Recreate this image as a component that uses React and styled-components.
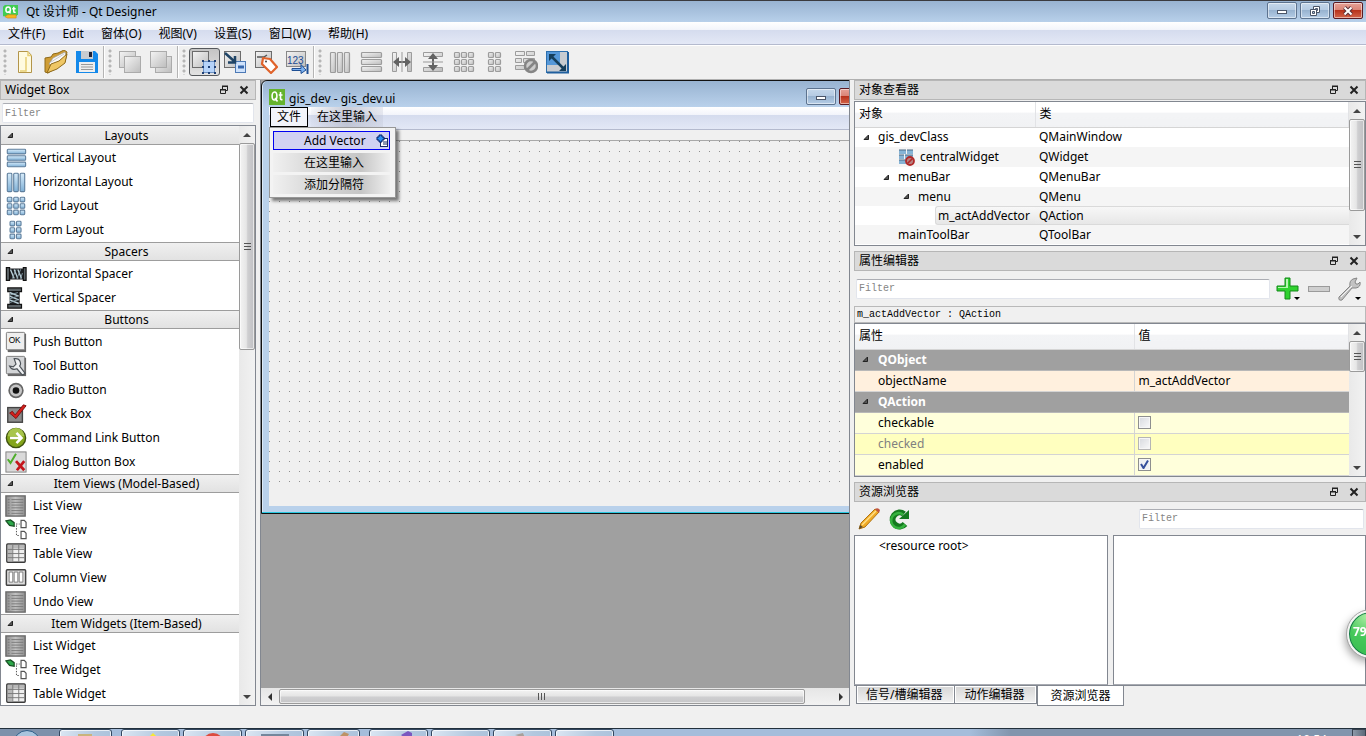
import React from "react";
import styled, { createGlobalStyle, css } from "styled-components";

const GlobalStyle = createGlobalStyle`
  * { box-sizing: border-box; }
  html, body { margin: 0; height: 100%; overflow: hidden; }
  body, button, input, table {
    font-family: "Noto Sans", "Noto Sans CJK SC", sans-serif;
    font-size: 12px;
    line-height: 16px;
    color: #000;
  }
  button { border: 0; padding: 0; background: none; }
  svg { display: block; flex: none; }
`;

/* ---------- window shell ---------- */

const Shell = styled.div`
  height: 100vh;
  display: flex;
  flex-direction: column;
  background: #f0f0f0;
  overflow: hidden;
`;

const TitleBar = styled.header`
  display: flex;
  align-items: center;
  gap: 8px;
  height: 22px;
  flex: none;
  padding: 0 3px;
  border-top: 1px solid #3a3a3e;
  background: linear-gradient(#98b3d1, #b8d0ea);
`;

const Title = styled.h1`
  flex: 1;
  margin: 0;
  font-size: 12px;
  font-weight: 400;
`;

const CaptionButtons = styled.div`
  display: flex;
  gap: 3px;
  align-self: flex-start;
  padding-top: 1px;
`;

const CaptionButton = styled.button`
  display: flex;
  align-items: center;
  justify-content: center;
  width: 30px;
  height: 17px;
  border: 1px solid ${(p) => (p.$close ? "#5c1a22" : "#5d738f")};
  border-radius: 2px;
  box-shadow: inset 0 0 0 1px rgba(255, 255, 255, 0.5);
  background: ${(p) =>
    p.$close
      ? "linear-gradient(#e6a196 0, #d98375 48%, #b8331c 50%, #d3644a 100%)"
      : "linear-gradient(#c5d7ea 0, #b4cae2 48%, #98b3d0 50%, #b5cde6 100%)"};
`;

const menuStrip = css`
  background: linear-gradient(#fff 0, #f3f5fb 34%, #d5dcee 38%, #e3e8f6 100%);
`;

const MenuBar = styled.nav`
  ${menuStrip}
  display: flex;
  gap: 1px;
  align-items: center;
  height: 23px;
  flex: none;
  border-bottom: 1px solid #b4bace;
`;

const MenuButton = styled.button`
  height: 22px;
  padding: 2px 8px 0;
`;

const ToolBar = styled.div`
  display: flex;
  height: 35px;
  flex: none;
  padding-bottom: 1px;
  border-top: 1px solid #fff;
  border-bottom: 1px solid #b0b0b0;
`;

const ToolGroup = styled.div`
  display: flex;
  align-items: center;
  border-right: ${(p) => (p.$last ? "0" : "1px solid #b4b4b4")};
  box-shadow: ${(p) => (p.$last ? "none" : "1px 0 #fff")};
  margin-right: 1px;
`;

const Grip = styled.span`
  width: 10px;
  height: 26px;
  background: radial-gradient(circle at 5px 2px, #b6b6b6 1px, transparent 2px) 0 0 / 10px 5px;
`;

const ToolButton = styled.button`
  display: flex;
  align-items: center;
  justify-content: center;
  width: 31px;
  height: 28px;
  padding-right: 1px;
  border-radius: 3px;
  ${(p) =>
    p.$pressed &&
    css`
      border: 1px solid #55585c;
      background: linear-gradient(#c4c4c4, #e2e2e2);
    `}
`;

const Main = styled.main`
  flex: 1;
  min-height: 0;
  display: flex;
  gap: 4px;
`;

const StatusBar = styled.div`
  height: 22px;
  flex: none;
`;

/* ---------- docks ---------- */

const LeftDock = styled.aside`
  width: 256px;
  flex: none;
  display: flex;
  flex-direction: column;
`;

const RightColumn = styled.aside`
  width: 512px;
  flex: none;
  display: flex;
  flex-direction: column;
  gap: 5px;
`;

const Dock = styled.section`
  display: flex;
  flex-direction: column;
  flex: ${(p) => (p.$grow ? "1" : "none")};
  min-height: 0;
`;

const DockHeader = styled.div`
  display: flex;
  align-items: center;
  gap: 9px;
  height: 20px;
  flex: none;
  padding: 0 5px 0 4px;
  border: 1px solid #b6b6b6;
  background: #dadada;
`;

const DockTitle = styled.h2`
  flex: 1;
  margin: 0;
  font-size: 12px;
  font-weight: 400;
`;

const IconButton = styled.button`
  display: flex;
  align-items: center;
  justify-content: center;
`;

const FilterInput = styled.input`
  flex: 1;
  min-width: 0;
  height: 20px;
  padding: 0 2px;
  border: 1px solid #e2e5ec;
  border-top-color: #abadb3;
  border-radius: 2px;
  background: #fff;
  font-family: "Liberation Mono", monospace;
  font-size: 10px;
  outline: none;
  &::placeholder { color: #858585; opacity: 1; }
`;

const FilterRow = styled.div`
  display: flex;
  padding: 3px 2px 2px;
`;

const Framed = styled.div`
  display: flex;
  min-height: 0;
  border: 1px solid #828790;
  background: #fff;
  height: ${(p) => p.$height || "auto"};
  flex: ${(p) => (p.$height ? "none" : "1")};
  margin-top: ${(p) => p.$top || "0"};
`;

const FrameBody = styled.div`
  flex: 1;
  min-width: 0;
  overflow: hidden;
`;

/* ---------- scroll bars ---------- */

const Bar = styled.div`
  display: flex;
  flex: none;
  flex-direction: ${(p) => (p.$horizontal ? "row" : "column")};
  ${(p) => (p.$horizontal ? "height: 17px;" : "width: 16px;")}
  background: ${(p) =>
    p.$horizontal
      ? "linear-gradient(#e6e6e6, #f2f2f2)"
      : "linear-gradient(90deg, #e9e9e9, #f2f2f2)"};
`;

const Arrow = styled.button`
  display: flex;
  align-items: center;
  justify-content: center;
  flex: 0 0 17px;
`;

const Track = styled.div`
  flex: 1;
  min-height: 0;
  min-width: 0;
`;

const Thumb = styled.div`
  display: flex;
  align-items: center;
  justify-content: center;
  border: 1px solid #9a9a9a;
  border-radius: 2px;
  box-shadow: inset 0 0 0 1px rgba(255, 255, 255, 0.6);
  ${(p) =>
    p.$horizontal
      ? css`
          width: ${p.$size};
          height: 15px;
          margin: 1px;
          background: linear-gradient(#f3f3f3 0, #e4e4e4 48%, #cfcfd1 52%, #c6c6c8 100%);
        `
      : css`
          height: ${p.$size};
          background: linear-gradient(90deg, #f3f3f3 0, #e6e6e6 45%, #cfcfd1 55%, #c0c0c3 100%);
        `}
`;

const arrows = {
  up: "M0 5 L4 1 L8 5Z",
  down: "M0 1 L4 5 L8 1Z",
};

function ScrollBar({ size, horizontal }) {
  return (
    <Bar $horizontal={horizontal}>
      <Arrow aria-label={horizontal ? "Scroll left" : "Scroll up"}>
        {horizontal ? (
          <svg width="6" height="8"><path d="M5 0L1 4l4 4z" fill="#333" /></svg>
        ) : (
          <svg width="8" height="6"><path d={arrows.up} fill="#444" /></svg>
        )}
      </Arrow>
      <Track>
        <Thumb $size={size} $horizontal={horizontal}>
          {horizontal ? (
            <svg width="8" height="7"><path d="M.5 0v7M3.500 0v7M6.500 0v7" stroke="#555" /></svg>
          ) : (
            <svg width="7" height="9"><path d="M0 1.500h7M0 4.500h7M0 7.500h7" stroke="#555" /></svg>
          )}
        </Thumb>
      </Track>
      <Arrow aria-label={horizontal ? "Scroll right" : "Scroll down"}>
        {horizontal ? (
          <svg width="6" height="8"><path d="M1 0l4 4-4 4z" fill="#333" /></svg>
        ) : (
          <svg width="8" height="6"><path d={arrows.down} fill="#444" /></svg>
        )}
      </Arrow>
    </Bar>
  );
}

/* ---------- small glyphs ---------- */

const FloatGlyph = () => (
  <svg width="10" height="10" viewBox="0 0 10 10" fill="none" stroke="#222">
    <path d="M3.500 4V1.500h5v4H6.500M3 1.500h6" />
    <path d="M1.500 4.500h5v4h-5zM1 4.500h6" />
    <path d="M3 1h6M1 5h6" />
  </svg>
);
const CloseGlyph = () => (
  <svg width="12" height="10" viewBox="0 0 12 10" stroke="#222" strokeWidth="2">
    <path d="M2.500 1.500l7 7M9.500 1.500l-7 7" />
  </svg>
);
const Expander = () => (
  <svg width="7" height="7" viewBox="0 0 7 7"><path d="M5.500 1V5.500H1z" fill="#555" stroke="#222" /></svg>
);
const MinGlyph = () => (
  <svg width="12" height="8" viewBox="0 0 12 8"><rect x="1.500" y="3.500" width="9" height="3" fill="#fff" stroke="#4a5568" /></svg>
);
const RestoreGlyph = () => (
  <svg width="12" height="12" viewBox="0 0 12 12" fill="#fff" stroke="#4a5568">
    <path d="M4.500 1.500h6v6h-6z" />
    <path d="M6.500 3.500h2v2h-2z" fill="#a8c0da" />
    <path d="M1.500 4.500h6v6h-6z" />
    <path d="M3.500 6.500h2v2h-2z" fill="#a8c0da" />
  </svg>
);
const WinCloseGlyph = () => (
  <svg width="12" height="10" viewBox="0 0 12 10">
    <path d="M2.500 1.500l7 7M9.500 1.500l-7 7" stroke="#5c3038" strokeWidth="4" />
    <path d="M2.500 1.500l7 7M9.500 1.500l-7 7" stroke="#fff" strokeWidth="2" />
  </svg>
);

const QtLogo = ({ size = 16, pencil }) => (
  <svg width={size} height={size} viewBox="0 0 16 16">
    <path d={pencil ? "M2 1h14v10l-2 2H0V3z" : "M0 0h16v16H0z"} fill={pencil ? "#41cd52" : "#65b32e"} />
    <g fill="none" stroke="#fff" strokeWidth="1.600">
      <ellipse cx="5.500" cy={pencil ? 6 : 7} rx="2.400" ry={pencil ? 2.8 : 4} />
      <path d={pencil ? "M6 7.500l2 2.500M11.500 3v5q0 1.200 2 .8M9.800 5h3.700" : "M6 9l2.500 3.500M11.500 3v6.500q0 1.500 2 1M9.800 6h3.700"} />
    </g>
    {pencil && <path d="M2 13.500l3-2h9v3.500H5z" fill="#f5b820" stroke="#d97f10" strokeWidth=".6" />}
  </svg>
);

/* ---------- tool bar and widget drawings ---------- */

const Svg = ({ children, size = 24 }) => (
  <svg width={size} height={size} viewBox="0 0 24 24" fill="none">
    <defs>
      <linearGradient id="gy" x2="1" y2="1"><stop stopColor="#f4f4f4" /><stop offset="1" stopColor="#bdbdbd" /></linearGradient>
      <linearGradient id="bl" x2="0" y2="1"><stop stopColor="#d8ecfa" /><stop offset="1" stopColor="#7fb0d6" /></linearGradient>
      <linearGradient id="dk"><stop stopColor="#8b8b8b" /><stop offset=".5" stopColor="#c2c2c2" /><stop offset="1" stopColor="#8f8f8f" /></linearGradient>
    </defs>
    {children}
  </svg>
);

const layouts = {
  rows: [[2, 2, 20, 5], [2, 9, 20, 5], [2, 16, 20, 5]],
  cols: [[2, 2, 5, 20], [9, 2, 5, 20], [16, 2, 5, 20]],
  grid: [2, 9, 16].flatMap((y) => [2, 9, 16].map((x) => [x, y, 5, 5])),
  form: [2, 9, 16].flatMap((y) => [5, 12].map((x) => [x, y, 5, 5])),
};

const Cells = ({ kind, blue }) =>
  layouts[kind].map(([x, y, w, h]) => (
    <rect key={`${x}-${y}`} x={x + 0.5} y={y + 0.5} width={w} height={h} rx="1"
      fill={blue ? "url(#bl)" : "url(#gy)"} stroke={blue ? "#5f7f9d" : "#9c9c9c"} strokeWidth="1.2" />
  ));

const LayoutIcon = ({ kind, blue, size }) => <Svg size={size}><Cells kind={kind} blue={blue} /></Svg>;

const Sheet = ({ x, y, s = 16, dark }) => (
  <rect x={x + 0.5} y={y + 0.5} width={s} height={s} fill="url(#gy)" stroke={dark ? "#6c6c6c" : "#ababab"} />
);

const toolIcons = {
  create: (
    <Svg><path d="M5.500 1.500H15l3.500 4v17h-13z" fill="#fffbe0" stroke="#b3954a" /><path d="M15 1.500v4h3.500M13 7v14H7" stroke="#e8cf74" strokeWidth="1.500" /></Svg>
  ),
  open: (
    <Svg>
      <path d="M1 8l6-1 2-3 5-1 6-3 3 2-2 10L4 23l-3-1z" fill="#cf9d35" stroke="#8f6a1a" />
      <path d="M5 14L9 8 21 2l1 5-13 9z" fill="#fafafa" stroke="#999" strokeWidth=".7" />
      <path d="M7 12L20 4" stroke="#c9c9c9" />
      <path d="M3 23l4-9 8-3 8-7-2 9-8 6z" fill="#efc765" stroke="#8f6a1a" />
    </Svg>
  ),
  save: (
    <Svg>
      <path d="M1 1h19l3 3v19H1z" fill="#1489ea" />
      <path d="M6 1h12v8H6z" fill="#c9ccd0" /><path d="M14 2h3v5h-3z" fill="#223" />
      <path d="M4 12h16v10H4z" fill="#eee" /><path d="M6 14.500h12M6 17h12M6 19.500h12" stroke="#999" />
    </Svg>
  ),
  front: <Svg><Sheet x={1} y={1} /><Sheet x={6} y={6} /></Svg>,
  back: <Svg><Sheet x={6} y={6} /><Sheet x={1} y={1} /></Svg>,
  widgets: (
    <Svg>
      <Sheet x={0} y={1} dark />
      <rect x="11.500" y="11.500" width="11" height="11" fill="#b5d3fa" stroke="#6e93c4" />
      <path d="M10 10h2v2h-2zM16 10h2v2h-2zM22 10h2v2h-2zM10 16h2v2h-2zM22 16h2v2h-2zM10 22h2v2h-2zM16 22h2v2h-2zM22 22h2v2h-2zM16 16h2v2h-2z" fill="#1e3f75" />
    </Svg>
  ),
  signals: (
    <Svg>
      <Sheet x={1} y={1} dark />
      <rect x="12.500" y="11.500" width="10" height="11" fill="#cfe2fb" stroke="#4c79b5" /><path d="M15 17h6" stroke="#3566ab" strokeWidth="3" />
      <path d="M2 3l9 8M12 6v6.500H5" stroke="#1f4466" strokeWidth="2.500" />
    </Svg>
  ),
  buddies: (
    <Svg>
      <Sheet x={1} y={1} dark />
      <path d="M3 7h7l3-2M10 7v4" stroke="#555" strokeWidth="1.500" />
      <path d="M9 8l7 1 7 8-6 6-9-9z" fill="#fff" stroke="#e0632b" strokeWidth="2.200" strokeLinejoin="round" /><circle cx="12" cy="11.500" r="1" fill="#444" />
    </Svg>
  ),
  tabs: (
    <Svg>
      <rect x="1.500" y="1.500" width="19" height="15" fill="url(#gy)" stroke="#888" />
      <text x="2" y="14" fontSize="10" fill="#1d4c94" fontFamily="Liberation Sans">123</text>
      <path d="M7 18.500h9v-4l5 5.500-5 3.500v-3H7z" fill="#7cb1ef" stroke="#1f4f94" /><path d="M22.500 14v10" stroke="#1f4f94" strokeWidth="2" />
    </Svg>
  ),
  cols: <LayoutIcon kind="cols" />,
  rows: <LayoutIcon kind="rows" />,
  splitH: (
    <Svg>
      <path d="M2.500 2.500h4v19h-4zM17.500 2.500h4v19h-4z" fill="url(#gy)" stroke="#9c9c9c" />
      <path d="M3 12l6-5v4h6V7l6 5-6 5v-4H9v4z" fill="#626262" /><path d="M12 2v20" stroke="#999" />
    </Svg>
  ),
  splitV: (
    <Svg>
      <path d="M2.500 2.500h19v4h-19zM2.500 17.500h19v4h-19z" fill="url(#gy)" stroke="#9c9c9c" />
      <path d="M12 3l5 6h-4v6h4l-5 6-5-6h4V9H7z" fill="#626262" /><path d="M2 12h20" stroke="#999" />
    </Svg>
  ),
  grid: <LayoutIcon kind="grid" />,
  form: <LayoutIcon kind="form" />,
  breakLayout: (
    <Svg>
      <path d="M1.500 1.500h9v4h-9zM12.500 1.500h8v4h-8zM1.500 8.500h6v4h-6zM9.500 8.500h11v4h-11zM1.500 15.500h9v4h-9z" fill="url(#gy)" stroke="#9c9c9c" />
      <circle cx="17" cy="16" r="6" fill="#ccc" stroke="#858585" strokeWidth="2.500" /><path d="M13 20l8-8" stroke="#858585" strokeWidth="2.500" />
    </Svg>
  ),
  adjust: (
    <Svg>
      <rect x="1.500" y="1.500" width="21" height="21" fill="#c8ccd1" stroke="#2c6fae" /><path d="M2 2h13v13H2z" fill="#5598d9" />
      <path d="M5 5l14 14" stroke="#163f5c" strokeWidth="2.500" /><path d="M4 4h7L4 11zM21 21h-7l7-7z" fill="#163f5c" />
      <path d="M2 22.500h21V2" stroke="#1f5f9e" strokeWidth="2" />
    </Svg>
  ),
};

const listIcon = (
  <Svg size={22}>
    <rect x="1" y="1" width="21" height="22" fill="url(#dk)" stroke="#6a6a6a" strokeWidth="1.500" />
    <path d="M3 5h2M7 5h13M3 8h2M7 8h13M3 11h2M7 11h13M3 14h2M7 14h13M3 17h2M7 17h13M3 20h2M7 20h13" stroke="#777" />
  </Svg>
);
const treeIcon = (
  <Svg size={22}>
    <path d="M1 2l5-1 4 3 0 4-5-1z" fill="#2da84a" stroke="#174f22" strokeWidth="1.300" />
    <path d="M12 5.500h4M12.500 7v11H16" stroke="#444" strokeDasharray="1.500 1.500" />
    <path d="M17.500 1.500h3.500l2 2v6h-5.500zM17.500 13.500h3.500l2 2v6h-5.500z" fill="#fff" stroke="#555" strokeWidth="1.300" />
  </Svg>
);
const tableIcon = (
  <Svg size={22}>
    <rect x="2" y="1" width="20" height="20" rx="1" fill="#f0f0f0" stroke="#3a3a3a" strokeWidth="1.600" />
    <path d="M3 2h18v4H3zM3 2h5v18H3z" fill="#b8b8b8" /><path d="M3 7h18M3 11.500h18M3 16h18M8.500 2v18M15 2v18" stroke="#777" />
  </Svg>
);

const widgetIcons = {
  rows: <LayoutIcon kind="rows" blue size={22} />,
  cols: <LayoutIcon kind="cols" blue size={22} />,
  grid: <LayoutIcon kind="grid" blue size={22} />,
  form: <LayoutIcon kind="form" blue size={22} />,
  hSpacer: (
    <Svg size={22}>
      <path d="M1.500 5h3.500v14H1.500zM20 5h3v14h-3z" fill="#5a6266" stroke="#111" strokeWidth="1.300" />
      <path d="M5 6h15v12H5z" fill="#1c1f22" /><path d="M6 7l4 10M10 7l4 10M14 7l4 10" stroke="#b9cfd8" strokeWidth="1.500" /><path d="M8 17l4-10M13 17l4-10M17 17l2-6" stroke="#8ea5b0" />
    </Svg>
  ),
  vSpacer: (
    <Svg size={22}>
      <path d="M3 1h15v4H3zM3 19h15v4H3z" fill="#5a6266" stroke="#111" strokeWidth="1.300" />
      <path d="M5 5h11v14H5z" fill="#1c1f22" /><path d="M5 6l10 4M5 10l10 4M5 14l10 4" stroke="#b9cfd8" strokeWidth="1.500" /><path d="M5 9l9-3M5 13l9-3M5 17l9-3" stroke="#8ea5b0" />
    </Svg>
  ),
  push: (
    <Svg size={22}>
      <path d="M3 3h20v20H3z" fill="#666" /><rect x="1.500" y="1.500" width="20" height="19" rx="1" fill="#eee" stroke="#777" />
      <text x="4" y="13" fontSize="9" fill="#000" fontFamily="Liberation Sans">OK</text>
    </Svg>
  ),
  tool: (
    <Svg size={22}>
      <path d="M3 3h20v20H3z" fill="#666" /><rect x="1.500" y="1.500" width="20" height="19" rx="1" fill="#d2d4d6" stroke="#777" />
      <path d="M10 4q6-1 7 5 0 2-1 3l6 8-3 2-6-7q-6 2-8-3l4 1 3-3z" fill="#eef0f2" stroke="#4d5359" strokeWidth="1.300" />
    </Svg>
  ),
  radio: (
    <Svg size={22}><circle cx="12" cy="12.500" r="7.500" fill="#c6c6c6" stroke="#666" strokeWidth="1.800" /><circle cx="12" cy="12.500" r="3.600" fill="#111" /></Svg>
  ),
  check: (
    <Svg size={22}>
      <rect x="3" y="5" width="16" height="16" fill="#8b8b8b" stroke="#444" strokeWidth="1.500" />
      <path d="M5 11l3-2 3 4 9-11 3 1-11 14z" fill="#d5201b" stroke="#7a0f0f" />
    </Svg>
  ),
  command: (
    <Svg size={22}>
      <circle cx="12" cy="12" r="10.500" fill="#84a51b" stroke="#3f5210" strokeWidth="1.500" /><path d="M3 10a9 9 0 0118 0z" fill="#a8c54b" />
      <path d="M5.500 12H18M12.500 6.500L18 12l-5.500 5.500" stroke="#fff" strokeWidth="2.800" />
    </Svg>
  ),
  dialog: (
    <Svg size={22}>
      <rect x="1" y="1" width="22" height="22" fill="#dadada" stroke="#7b7b7b" />
      <path d="M3 9l3 4 6-10" stroke="#4fae2c" strokeWidth="2.200" /><path d="M12 11l9 10M21 11l-8 10" stroke="#c4161c" strokeWidth="3" />
    </Svg>
  ),
  list: listIcon,
  tree: treeIcon,
  table: tableIcon,
  column: (
    <Svg size={22}>
      <rect x="1.500" y="3" width="21" height="17" rx="1" fill="#ddd" stroke="#444" strokeWidth="1.600" />
      <path d="M4.500 5.500h4v11h-4zM10 5.500h4v11h-4zM15.500 5.500h4v11h-4z" fill="#fff" stroke="#777" />
    </Svg>
  ),
};

/* ---------- widget box ---------- */

const GroupHeader = styled.button`
  display: flex;
  align-items: center;
  width: 100%;
  height: 19px;
  margin-bottom: 1px;
  padding: 0 0 0 6px;
  border-top: 1px solid ${(p) => (p.$first ? "#f4f4f4" : "#9d9d9d")};
  border-bottom: 1px solid #9d9d9d;
  background: linear-gradient(#f0f0f0, #e2e2e2);
`;

const GroupName = styled.span`
  flex: 1;
  text-align: center;
`;

const WidgetList = styled.ul`
  list-style: none;
  margin: 0;
  padding: 0;
`;

const WidgetItem = styled.li`
  display: flex;
  align-items: center;
  gap: 6px;
  height: 24px;
  padding-left: 4px;
`;

const groups = [
  ["Layouts", [["rows", "Vertical Layout"], ["cols", "Horizontal Layout"], ["grid", "Grid Layout"], ["form", "Form Layout"]]],
  ["Spacers", [["hSpacer", "Horizontal Spacer"], ["vSpacer", "Vertical Spacer"]]],
  ["Buttons", [["push", "Push Button"], ["tool", "Tool Button"], ["radio", "Radio Button"], ["check", "Check Box"], ["command", "Command Link Button"], ["dialog", "Dialog Button Box"]]],
  ["Item Views (Model-Based)", [["list", "List View"], ["tree", "Tree View"], ["table", "Table View"], ["column", "Column View"], ["list", "Undo View"]]],
  ["Item Widgets (Item-Based)", [["list", "List Widget"], ["tree", "Tree Widget"], ["table", "Table Widget"]]],
];

function DockTitleBar({ children }) {
  return (
    <DockHeader>
      <DockTitle>{children}</DockTitle>
      <IconButton aria-label="Float"><FloatGlyph /></IconButton>
      <IconButton aria-label="Close"><CloseGlyph /></IconButton>
    </DockHeader>
  );
}

function WidgetBox() {
  return (
    <LeftDock>
      <DockTitleBar>Widget Box</DockTitleBar>
      <FilterRow><FilterInput placeholder="Filter" aria-label="Filter widgets" /></FilterRow>
      <Framed>
        <FrameBody>
          {groups.map(([name, items], i) => (
            <section key={name}>
              <GroupHeader $first={i === 0}><Expander /><GroupName>{name}</GroupName></GroupHeader>
              <WidgetList>
                {items.map(([icon, label]) => (
                  <WidgetItem key={label}>{widgetIcons[icon]}{label}</WidgetItem>
                ))}
              </WidgetList>
            </section>
          ))}
        </FrameBody>
        <ScrollBar size="38%" />
      </Framed>
    </LeftDock>
  );
}

/* ---------- form editor ---------- */

const Workspace = styled.section`
  flex: 1;
  min-width: 0;
  display: flex;
  flex-direction: column;
  border: 1px solid #828790;
  border-top: 0;
  background: #a0a0a0;
  overflow: hidden;
`;

const Desktop = styled.div`
  flex: 1;
  min-height: 0;
  overflow: hidden;
`;

const FormWindow = styled.div`
  display: flex;
  flex-direction: column;
  height: 434px;
  margin-right: -28px;
  padding: 0 7px 7px;
  border: 1px solid #111;
  border-radius: 6px 0 0 0;
  box-shadow: inset 0 -1px #27c8e0, inset 1px 0 #dbe9f7;
  background: linear-gradient(#98b3d1, #b9d1eb 26px);
`;

const FormTitle = styled.div`
  display: flex;
  align-items: center;
  gap: 4px;
  height: 26px;
  flex: none;
  padding-top: 6px;
`;

const FormCaption = styled.h2`
  flex: 1;
  margin: 0;
  padding-top: 3px;
  font-size: 12px;
  font-weight: 400;
`;

const FormMenuBar = styled.div`
  ${menuStrip}
  position: relative;
  display: flex;
  gap: 3px;
  height: 23px;
  flex: none;
  padding: 0 1px 2px;
  border-bottom: 1px solid #b4bace;
`;

const FormMenu = styled.button`
  padding: 0 6px;
  ${(p) =>
    p.$active
      ? "border: 1px solid #000; background: #f2f4fa;"
      : "background: linear-gradient(90deg, rgba(190, 194, 210, 0.1), rgba(180, 184, 200, 0.7), rgba(190, 194, 210, 0.3));"}
`;

const FormToolStrip = styled.div`
  height: 11px;
  flex: none;
  border-bottom: 1px solid #a8a8a8;
  background: #f0f0f0;
`;

const Canvas = styled.div`
  flex: 1;
  background:
    linear-gradient(90deg, transparent 1px, #f0f0f0 1px) 0 0 / 10px 10px,
    linear-gradient(#909090 1px, #f0f0f0 1px) 0 0 / 10px 10px;
`;

const FormStatus = styled.div`
  height: 22px;
  flex: none;
  background: #f0f0f0;
`;

const Popup = styled.div`
  position: absolute;
  left: 0;
  top: 20px;
  z-index: 1;
  display: flex;
  flex-direction: column;
  gap: 3px;
  width: 127px;
  padding: 3px;
  border: 1px solid #979797;
  background: #f3f3f3;
  box-shadow: 3px 3px 3px rgba(0, 0, 0, 0.5);
`;

const PopupItem = styled.button`
  display: flex;
  align-items: center;
  justify-content: space-between;
  height: 19px;
  margin-right: 2px;
  padding-left: 31px;
  ${(p) =>
    p.$selected
      ? "border: 1px solid #0000f0; background: #d1d1f2; padding-left: 30px;"
      : "background: linear-gradient(90deg, #f0f0f0, #dedede 25%, #c6c6c6 75%, #efefef);"}
`;

const AddSubmenuGlyph = () => (
  <svg width="13" height="13" viewBox="0 0 13 13">
    <rect x="4.500" y="4.500" width="7" height="8" fill="#fff" stroke="#1a2c63" /><path d="M7 8h4M7 10h4" stroke="#1a2c63" />
    <path d="M3 1h3v2h2v3H6v2H3V6H1V3h2z" fill="#2d8ff0" stroke="#001c66" />
  </svg>
);

function FormEditor() {
  return (
    <Workspace>
      <Desktop>
        <FormWindow>
          <FormTitle>
            <QtLogo />
            <FormCaption>gis_dev - gis_dev.ui</FormCaption>
            <CaptionButtons>
              <CaptionButton aria-label="Minimize form"><MinGlyph /></CaptionButton>
              <CaptionButton $close aria-label="Close form" />
            </CaptionButtons>
          </FormTitle>
          <FormMenuBar>
            <FormMenu $active>文件</FormMenu>
            <FormMenu>在这里输入</FormMenu>
            <Popup>
              <PopupItem $selected>Add Vector<AddSubmenuGlyph /></PopupItem>
              <PopupItem>在这里输入</PopupItem>
              <PopupItem>添加分隔符</PopupItem>
            </Popup>
          </FormMenuBar>
          <FormToolStrip />
          <Canvas />
          <FormStatus />
        </FormWindow>
      </Desktop>
      <ScrollBar horizontal size="95%" />
    </Workspace>
  );
}

/* ---------- object inspector ---------- */

const Grid = styled.table`
  width: 100%;
  table-layout: fixed;
  border-collapse: collapse;
`;

const HeadCell = styled.th`
  width: ${(p) => p.$width || "auto"};
  height: 25px;
  padding: 0 4px;
  border-bottom: 1px solid #d5d5d5;
  border-right: 1px solid #e2e3e6;
  background: linear-gradient(#fff 40%, #f3f4f6 45%, #f1f2f4);
  text-align: left;
  font-weight: 400;
`;

const TreeRow = styled.tr`
  height: ${(p) => (p.$compact ? "19px" : "20px")};
  background: ${(p) => (p.$odd ? "#f5f5f5" : "#fff")};
`;

const TreeCell = styled.td`
  padding: 0 0 0 ${(p) => p.$indent || "4px"};
  ${(p) => p.$selected && "background: linear-gradient(#f8f8f8, #e6e6e6); box-shadow: inset 0 1px #dadada, inset 0 -1px #dadada;"}
`;

const NodeLabel = styled.span`
  display: flex;
  align-items: center;
  gap: ${(p) => (p.$icon ? "5px" : "8px")};
  white-space: nowrap;
  ${(p) =>
    p.$selected &&
    "height: 19px; padding-left: 2px; border: 1px solid #dadada; border-right: 0; border-radius: 3px 0 0 3px; background: linear-gradient(#f8f8f8, #e6e6e6);"}
`;

const BrokenLayout = () => (
  <svg width="17" height="17" viewBox="0 0 17 17" fill="none">
    <path d="M1 1h7v4H1zM9 1h6v4H9zM1 6h5v4H1zM7 6h8v4H7zM1 11h7v4H1z" fill="#86b4d6" />
    <path d="M1 1h7M9 1h6M1 6h5M7 6h8M1 11h7" stroke="#4d6a85" />
    <circle cx="12" cy="12" r="4" fill="#b98080" stroke="#b02a2a" strokeWidth="1.800" /><path d="M9.500 14.500l5-5" stroke="#b02a2a" strokeWidth="1.600" />
  </svg>
);

const objects = [
  { name: "gis_devClass", cls: "QMainWindow", indent: "8px", open: true },
  { name: "centralWidget", cls: "QWidget", indent: "43px", icon: true },
  { name: "menuBar", cls: "QMenuBar", indent: "28px", open: true },
  { name: "menu", cls: "QMenu", indent: "48px", open: true },
  { name: "m_actAddVector", cls: "QAction", indent: "80px", selected: true },
  { name: "mainToolBar", cls: "QToolBar", indent: "43px" },
];

function ObjectInspector() {
  return (
    <Dock>
      <DockTitleBar>对象查看器</DockTitleBar>
      <Framed $height="145px" $top="1px">
        <FrameBody>
          <Grid>
            <thead><tr><HeadCell $width="180px">对象</HeadCell><HeadCell>类</HeadCell></tr></thead>
            <tbody>
              {objects.map((o, i) => (
                <TreeRow key={o.name} $odd={i % 2 === 1} $compact={i > 2}>
                  <TreeCell $indent={o.indent}>
                    <NodeLabel $icon={o.icon} $selected={o.selected}>
                      {o.open && <Expander />}{o.icon && <BrokenLayout />}{o.name}
                    </NodeLabel>
                  </TreeCell>
                  <TreeCell $selected={o.selected}>{o.cls}</TreeCell>
                </TreeRow>
              ))}
            </tbody>
          </Grid>
        </FrameBody>
        <ScrollBar size="84%" />
      </Framed>
    </Dock>
  );
}

/* ---------- property editor ---------- */

const PropertyTools = styled.div`
  display: flex;
  align-items: center;
  gap: 6px;
  height: 35px;
  padding: 0 4px 0 2px;
`;

const ObjectLabel = styled.div`
  height: 17px;
  padding: 0 2px;
  border: 1px solid #b9b9b9;
  font-family: "Liberation Mono", monospace;
  font-size: 10px;
  line-height: 15px;
`;

const rowColors = {
  group: "#a0a0a0",
  name: "#fff0de",
  light: "#ffffdb",
  dim: "#ffffbf",
};

const PropertyRow = styled.tr`
  height: 21px;
  background: ${(p) => rowColors[p.$tone]};
  color: ${(p) => (p.$tone === "group" ? "#fff" : p.$tone === "dim" ? "#808080" : "#000")};
  font-weight: ${(p) => (p.$tone === "group" ? 700 : 400)};
`;

const PropertyCell = styled.td`
  padding: 0 0 0 ${(p) => (p.$name ? "23px" : "4px")};
  border-bottom: 1px solid #d4d4d4;
  border-right: ${(p) => (p.$name ? "1px solid #d4d4d4" : "0")};
`;

const GroupCell = styled.td`
  padding: 0 0 0 7px;
  border-bottom: 1px solid #b8b8b8;
`;

const GroupLabel = styled.span`
  display: flex;
  align-items: center;
  gap: 9px;
`;

const CheckBox = styled.input`
  appearance: none;
  display: block;
  width: 13px;
  height: 13px;
  margin: 0 0 0 -1px;
  border: 1px solid ${(p) => (p.disabled ? "#b5b5b5" : "#8e8f8f")};
  box-shadow: inset 0 0 0 1px #f6f6f6;
  background: linear-gradient(135deg, #d6d9de, #fafafa);
  &:checked {
    background: url("data:image/svg+xml,%3Csvg xmlns='http://www.w3.org/2000/svg' viewBox='0 0 11 11'%3E%3Cpath d='M2 5l2.500 4L9 1.500' fill='none' stroke='%23344f9c' stroke-width='2'/%3E%3C/svg%3E") #eef0f4;
  }
`;

const PlusGlyph = () => (
  <svg width="25" height="24" viewBox="0 0 25 24">
    <path d="M9 1h5v8h8v5h-8v8H9v-8H1V9h8z" fill="#2fd12f" stroke="#14891a" /><path d="M10 2h2v9H2v-1h8z" fill="#b6f5b0" />
    <path d="M18 20h6l-3 3z" fill="#000" />
  </svg>
);
const MinusGlyph = () => (
  <svg width="24" height="24" viewBox="0 0 24 24"><rect x="1.500" y="9.500" width="21" height="5" fill="#cfcfcf" stroke="#9b9b9b" /></svg>
);
const WrenchGlyph = () => (
  <svg width="25" height="24" viewBox="0 0 25 24">
    <path d="M2 20l11-11q-1-5 3-7l4-1-2 4 1 2 2 0 2-2q1 5-4 6l-4 0L5 23q-4 1-3-3z" fill="#c2c2c2" stroke="#858585" /><path d="M4 20L15 9" stroke="#f5f5f5" />
    <path d="M18 20h6l-3 3z" fill="#000" />
  </svg>
);

function PropertyEditor() {
  return (
    <Dock>
      <DockTitleBar>属性编辑器</DockTitleBar>
      <PropertyTools>
        <FilterInput placeholder="Filter" aria-label="Filter properties" />
        <IconButton aria-label="Add property"><PlusGlyph /></IconButton>
        <IconButton aria-label="Remove property"><MinusGlyph /></IconButton>
        <IconButton aria-label="Configure"><WrenchGlyph /></IconButton>
      </PropertyTools>
      <ObjectLabel>m_actAddVector : QAction</ObjectLabel>
      <Framed $height="154px">
        <FrameBody>
          <Grid>
            <thead><tr><HeadCell $width="279px">属性</HeadCell><HeadCell>值</HeadCell></tr></thead>
            <tbody>
              <PropertyRow $tone="group"><GroupCell colSpan={2}><GroupLabel><Expander />QObject</GroupLabel></GroupCell></PropertyRow>
              <PropertyRow $tone="name"><PropertyCell $name>objectName</PropertyCell><PropertyCell>m_actAddVector</PropertyCell></PropertyRow>
              <PropertyRow $tone="group"><GroupCell colSpan={2}><GroupLabel><Expander />QAction</GroupLabel></GroupCell></PropertyRow>
              <PropertyRow $tone="light"><PropertyCell $name><label htmlFor="checkable">checkable</label></PropertyCell><PropertyCell><CheckBox type="checkbox" id="checkable" /></PropertyCell></PropertyRow>
              <PropertyRow $tone="dim"><PropertyCell $name><label htmlFor="checked">checked</label></PropertyCell><PropertyCell><CheckBox type="checkbox" id="checked" disabled /></PropertyCell></PropertyRow>
              <PropertyRow $tone="light"><PropertyCell $name><label htmlFor="enabled">enabled</label></PropertyCell><PropertyCell><CheckBox type="checkbox" id="enabled" defaultChecked /></PropertyCell></PropertyRow>
            </tbody>
          </Grid>
        </FrameBody>
        <ScrollBar size="26%" />
      </Framed>
    </Dock>
  );
}

/* ---------- resource browser ---------- */

const ResourceTools = styled.div`
  display: flex;
  align-items: center;
  gap: 6px;
  height: 33px;
  flex: none;
  padding: 0 2px 0 3px;
`;

const ResourceFilter = styled.div`
  display: flex;
  width: 225px;
  margin-left: auto;
`;

const Panes = styled.div`
  flex: 1;
  min-height: 0;
  display: flex;
  gap: 5px;
  border-bottom: 1px solid #828790;
`;

const Pane = styled.div`
  flex: ${(p) => p.$share};
  padding: 2px 24px;
  border: 1px solid #828790;
  border-bottom-color: #a8abb2;
  background: #fff;
`;

const Tabs = styled.div`
  display: flex;
  align-items: flex-start;
  height: 20px;
  flex: none;
  padding-left: 2px;
`;

const Tab = styled.button`
  height: ${(p) => (p.$active ? "20px" : "18px")};
  padding: 0 12px 0 ${(p) => (p.$active ? "12px" : "9px")};
  border: 1px solid #828790;
  border-top: 0;
  border-left-width: ${(p) => (p.$joined ? "0" : "1px")};
  box-shadow: inset 0 0 0 1px #fff;
  background: ${(p) => (p.$active ? "#fff" : "linear-gradient(#d6d6d6, #f2f2f2)")};
`;

const PencilGlyph = () => (
  <svg width="24" height="24" viewBox="0 0 24 24">
    <path d="M2 22l2-6L18 2l4 3L8 20z" fill="#f0ab27" stroke="#b17414" /><path d="M5 18L19 4" stroke="#ffe08a" strokeWidth="1.500" />
    <path d="M18 2q3-2 5 1l-1 3-4-4z" fill="#c25540" /><path d="M2 22l1-4 3 2z" fill="#5c4a2b" />
  </svg>
);
const ReloadGlyph = () => (
  <svg width="24" height="24" viewBox="0 0 24 24">
    <path d="M18 17a7 7 0 11-1-10" fill="none" stroke="#14791f" strokeWidth="6" /><path d="M22 3v9H12z" fill="#14791f" />
    <path d="M18 17.500a7.500 7.500 0 11-2-10" fill="none" stroke="#35b23e" strokeWidth="2.500" />
  </svg>
);

function ResourceBrowser() {
  return (
    <Dock $grow>
      <DockTitleBar>资源浏览器</DockTitleBar>
      <ResourceTools>
        <IconButton aria-label="Edit resources"><PencilGlyph /></IconButton>
        <IconButton aria-label="Reload"><ReloadGlyph /></IconButton>
        <ResourceFilter><FilterInput placeholder="Filter" aria-label="Filter resources" /></ResourceFilter>
      </ResourceTools>
      <Panes>
        <Pane $share="1">&lt;resource root&gt;</Pane>
        <Pane $share="1" />
      </Panes>
      <Tabs role="tablist">
        <Tab role="tab">信号/槽编辑器</Tab>
        <Tab role="tab" $joined>动作编辑器</Tab>
        <Tab role="tab" $active>资源浏览器</Tab>
      </Tabs>
    </Dock>
  );
}

/* ---------- desktop extras ---------- */

const SpeedBall = styled.div`
  position: fixed;
  right: -29px;
  bottom: 78px;
  width: 48px;
  height: 48px;
  padding: 12px 0 0 4px;
  border: 2px solid #f4f4f4;
  border-radius: 50%;
  outline: 1px solid #a6a6a6;
  box-shadow: inset 0 0 0 1px #16764a, -2px 4px 8px rgba(0, 0, 0, 0.35);
  background: radial-gradient(circle at 40% 10%, #a7eca0, #45c85a 45%, #35b84e);
  color: #fff;
  font-size: 12px;
  font-weight: 700;
`;

const TaskBar = styled.footer`
  display: flex;
  gap: 3px;
  height: 8px;
  flex: none;
  overflow: hidden;
  border-top: 1px solid #22303c;
  background: linear-gradient(90deg, #7d91ab 0, #7d91ab 58px, #a5bddb 64px, #a5bddb 71%, #8295ad 74%);
`;

const StartOrb = styled.button`
  width: 28px;
  height: 28px;
  flex: none;
  margin: 1px 15px 0 13px;
  border: 1px solid #2b5b86;
  border-radius: 50%;
  background: #a8c4dd;
`;

const TaskButton = styled.button`
  display: flex;
  justify-content: center;
  flex: none;
  width: ${(p) => (p.$narrow ? "53px" : "59px")};
  margin-right: ${(p) => (p.$stack ? "6px" : "0")};
  height: 30px;
  border: 1px solid #33475f;
  border-radius: 3px 3px 0 0;
  box-shadow: inset 0 0 0 1px rgba(255, 255, 255, 0.7);
  background: linear-gradient(110deg, #dce7f3, #b3c8df 60%, #a9c0da);
`;

const tasks = [
  { name: "Explorer", narrow: true, stack: true, art: <path d="M12 4h14v3H12z" fill="#c9b47c" /> },
  { name: "Shield", art: <path d="M22 3l6 6H16z" fill="#f7e834" /> },
  { name: "Browser", art: <circle cx="20" cy="14" r="11" fill="#dc4c3f" /> },
  { name: "Monitor", art: <path d="M6 4h28v4H6z" fill="#74879c" /> },
  { name: "Editor", narrow: true, stack: true, art: <path d="M24 8l6-6 5 2-3 5z" fill="#bd9366" /> },
  { name: "Studio", art: <path d="M22 5l7-4 4 2v5h-7z" fill="#7a58c0" /> },
  { name: "Notes" },
  { name: "Viewer", art: <path d="M12 5l8-2 2 5z" fill="#a8a09a" /> },
  { name: "Designer" },
];

const Clock = styled.time`
  margin-left: auto;
  padding: 3px 22px 0 0;
  color: #fff;
  font-size: 12px;
`;

const ShowDesktop = styled.button`
  width: 14px;
  height: 30px;
  border: 1px solid #38424f;
  background: linear-gradient(90deg, #8c99a8, #5d6a7a);
`;

const toolGroups = [
  ["create", "open", "save"],
  ["front", "back"],
  ["widgets", "signals", "buddies", "tabs"],
  ["cols", "rows", "splitH", "splitV", "grid", "form", "breakLayout", "adjust"],
];

const menus = ["文件(F)", "Edit", "窗体(O)", "视图(V)", "设置(S)", "窗口(W)", "帮助(H)"];

export default function App() {
  return (
    <>
      <GlobalStyle />
      <Shell>
        <TitleBar>
          <QtLogo pencil size={15} />
          <Title>Qt 设计师 - Qt Designer</Title>
          <CaptionButtons>
            <CaptionButton aria-label="Minimize"><MinGlyph /></CaptionButton>
            <CaptionButton aria-label="Restore"><RestoreGlyph /></CaptionButton>
            <CaptionButton $close aria-label="Close"><WinCloseGlyph /></CaptionButton>
          </CaptionButtons>
        </TitleBar>
        <MenuBar>{menus.map((m) => <MenuButton key={m}>{m}</MenuButton>)}</MenuBar>
        <ToolBar>
          {toolGroups.map((names, i) => (
            <ToolGroup key={names[0]} $last={i === toolGroups.length - 1}>
              <Grip />
              {names.map((n) => (
                <ToolButton key={n} aria-label={n} $pressed={n === "widgets"}>{toolIcons[n]}</ToolButton>
              ))}
            </ToolGroup>
          ))}
        </ToolBar>
        <Main>
          <WidgetBox />
          <FormEditor />
          <RightColumn>
            <ObjectInspector />
            <PropertyEditor />
            <ResourceBrowser />
          </RightColumn>
        </Main>
        <StatusBar />
        <TaskBar>
          <StartOrb aria-label="Start" />
          {tasks.map((t) => (
            <TaskButton key={t.name} aria-label={t.name} $narrow={t.narrow} $stack={t.stack}>
              <svg width="40" height="28">{t.art}</svg>
            </TaskButton>
          ))}
          <Clock>10:54</Clock>
          <ShowDesktop aria-label="Show desktop" />
        </TaskBar>
      </Shell>
      <SpeedBall>79</SpeedBall>
    </>
  );
}
